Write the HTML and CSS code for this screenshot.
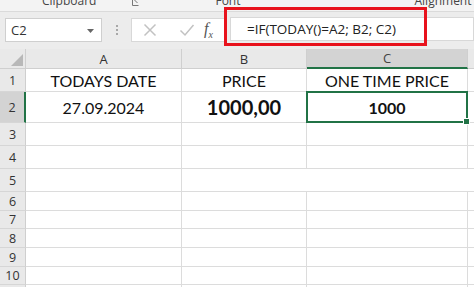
FILE: index.html
```html
<!DOCTYPE html>
<html>
<head>
<meta charset="utf-8">
<link rel="stylesheet" href="styles.css">
</head>
<body>
<div class="app">
  <div class="ribbon">
    <span class="grp grp-clip">Clipboard</span>
    <span class="launcher"><svg width="7" height="6" viewBox="0 0 7 6"><path d="M0.5 0v5.5H6.5" fill="none" stroke="#777" stroke-width="1"/><path d="M2.5 0L5.5 3" stroke="#777" stroke-width="1"/></svg></span>
    <span class="grp grp-font">Font</span>
    <span class="grp grp-align">Alignment</span>
  </div>
  <div class="fbar">
    <div class="namebox"><span>C2</span><svg class="caret" width="7" height="4" viewBox="0 0 7 4"><path d="M0 0h7L3.5 4z" fill="#666"/></svg></div>
    <div class="dots"><i></i><i></i><i></i></div>
    <div class="btns">
      <svg class="ico" width="14" height="14" viewBox="0 0 14 14"><path d="M1.5 1.5L12.5 12.5M12.5 1.5L1.5 12.5" stroke="#c2c2c2" stroke-width="1.5"/></svg>
      <svg class="ico ico-ok" width="16" height="14" viewBox="0 0 16 14"><path d="M1.5 7.5L6 12L14.5 2" fill="none" stroke="#c2c2c2" stroke-width="1.5"/></svg>
      <span class="fx">f<sub>x</sub></span>
    </div>
    <div class="finput">=IF(TODAY()=A2; B2; C2)</div>
    <div class="redbox"></div>
  </div>
  <div class="sheet">
    <div class="corner"><svg width="12" height="12" viewBox="0 0 12 12"><path d="M12 0V12H0z" fill="#b8b8b8"/></svg></div>
    <div class="ch">A</div>
    <div class="ch">B</div>
    <div class="ch ch-sel">C</div>
    <div class="ch"></div>

    <div class="rh">1</div>
    <div class="c">TODAYS DATE</div>
    <div class="c">PRICE</div>
    <div class="c">ONE TIME PRICE</div>
    <div class="c"></div>

    <div class="rh rh-sel">2</div>
    <div class="c">27.09.2024</div>
    <div class="c c-big">1000,00</div>
    <div class="c c-bold c-sel">1000</div>
    <div class="c"></div>

    <div class="rh">3</div><div class="c"></div><div class="c"></div><div class="c"></div><div class="c"></div>
    <div class="rh">4</div><div class="c"></div><div class="c"></div><div class="c"></div><div class="c"></div>
    <div class="rh">5</div><div class="c"></div><div class="c c-span"></div>
    <div class="rh">6</div><div class="c"></div><div class="c"></div><div class="c"></div><div class="c"></div>
    <div class="rh">7</div><div class="c"></div><div class="c"></div><div class="c"></div><div class="c"></div>
    <div class="rh">8</div><div class="c"></div><div class="c"></div><div class="c"></div><div class="c"></div>
    <div class="rh">9</div><div class="c"></div><div class="c"></div><div class="c"></div><div class="c"></div>
    <div class="rh">10</div><div class="c"></div><div class="c"></div><div class="c"></div><div class="c"></div>
    <div class="rh"></div><div class="c"></div><div class="c"></div><div class="c"></div><div class="c"></div>
  </div>
</div>
</body>
</html>
```
FILE: styles.css
```css
html, body {
  margin: 0;
  padding: 0;
  background: #ffffff;
  overflow: hidden;
}
.app {
  width: 474px;
  height: 287px;
  overflow: hidden;
  font-family: "Open Sans", "DejaVu Sans", sans-serif;
}
.ribbon {
  height: 11px;
  background: #f3f3f3;
  border-bottom: 1px solid #dadada;
  display: flex;
  align-items: flex-end;
  overflow: hidden;
  position: relative;
}
.grp {
  font-size: 12px;
  line-height: 12px;
  color: #444;
  margin-bottom: 4px;
  height: 12px;
}
.grp-clip { margin-left: 42px; }
.launcher { margin-left: 36px; margin-bottom: 5px; display: flex; }
.grp-font { margin-left: 76px; }
.grp-align { margin-left: 174px; }

.fbar {
  height: 37px;
  background: #ececec;
  position: relative;
  display: flex;
  align-items: flex-start;
}
.namebox {
  margin-left: 5px;
  margin-top: 6px;
  width: 97px;
  height: 24px;
  box-sizing: border-box;
  background: #fff;
  border: 1px solid #cfcfcf;
  display: flex;
  align-items: center;
  justify-content: space-between;
  padding: 0 7px 0 5px;
  font-size: 13px;
  color: #333;
}
.caret { margin-top: 1px; }
.dots {
  margin-left: 14px;
  margin-top: 13px;
  display: flex;
  flex-direction: column;
  gap: 2px;
}
.dots i {
  display: block;
  width: 2px;
  height: 2px;
  background: #a8a8a8;
}
.btns {
  margin-left: 13px;
  margin-top: 6px;
  width: 94px;
  height: 24px;
  box-sizing: border-box;
  background: #fff;
  border: 1px solid #d8d8d8;
  display: flex;
  align-items: center;
  padding-left: 11px;
}
.ico-ok { margin-left: 22px; }
.fx {
  margin-left: 9px;
  font-family: "Liberation Serif", serif;
  font-style: italic;
  font-size: 16px;
  color: #555;
}
.fx sub { font-size: 10px; }
.finput {
  margin-left: 5px;
  margin-top: 5px;
  flex: 1;
  height: 24px;
  box-sizing: border-box;
  background: #fff;
  border: 1px solid #d8d8d8;
  padding-left: 16px;
  font-size: 13.5px;
  line-height: 22px;
  color: #222;
}
.redbox {
  position: absolute;
  left: 224px;
  top: -5px;
  width: 203px;
  height: 39px;
  box-sizing: border-box;
  border: 3.5px solid #e8121c;
}

.sheet {
  display: grid;
  grid-template-columns: 26px 156px 125px 161px 40px;
  grid-template-rows: 20px 23px 31px 23px 23px 23px 19px 18px 19px 19px 18px 20px;
}
.corner {
  background: #e9e9e9;
  border-right: 1px solid #cfcfcf;
  border-bottom: 1px solid #cfcfcf;
  box-sizing: border-box;
  display: flex;
  align-items: flex-end;
  justify-content: flex-end;
  padding: 0 2px 2px 0;
}
.ch {
  background: #e9e9e9;
  border-right: 1px solid #cfcfcf;
  border-bottom: 1px solid #cfcfcf;
  box-sizing: border-box;
  display: flex;
  align-items: center;
  justify-content: center;
  font-size: 13px;
  color: #333;
}
.ch-sel {
  background: #d3d3d3;
  border-bottom: 2px solid #217346;
  color: #444;
}
.rh {
  background: #e9e9e9;
  border-right: 1px solid #cfcfcf;
  border-bottom: 1px solid #d6d6d6;
  box-sizing: border-box;
  display: flex;
  align-items: center;
  justify-content: center;
  font-size: 12.5px;
  color: #333;
}
.rh-sel {
  background: #d3d3d3;
  border-right: 2px solid #217346;
}
.c {
  border-right: 1px solid #dcdcdc;
  border-bottom: 1px solid #dcdcdc;
  box-sizing: border-box;
  display: flex;
  align-items: center;
  justify-content: center;
  font-family: "Lato", "Liberation Sans", sans-serif;
  font-size: 16px;
  color: #111;
}
.c-big {
  font-weight: 700;
  font-size: 20px;
}
.c-bold {
  font-weight: 700;
  font-size: 16px;
}
.c-span {
  grid-column: span 3;
  border-right: none;
}
.c-sel {
  position: relative;
}
.c-sel::before {
  content: "";
  position: absolute;
  left: -1px;
  top: -1px;
  right: -1px;
  bottom: -1px;
  border: 2px solid #217346;
}
.c-sel::after {
  content: "";
  position: absolute;
  right: -3px;
  bottom: -3px;
  width: 5px;
  height: 5px;
  background: #217346;
  border: 1px solid #fff;
}
```
